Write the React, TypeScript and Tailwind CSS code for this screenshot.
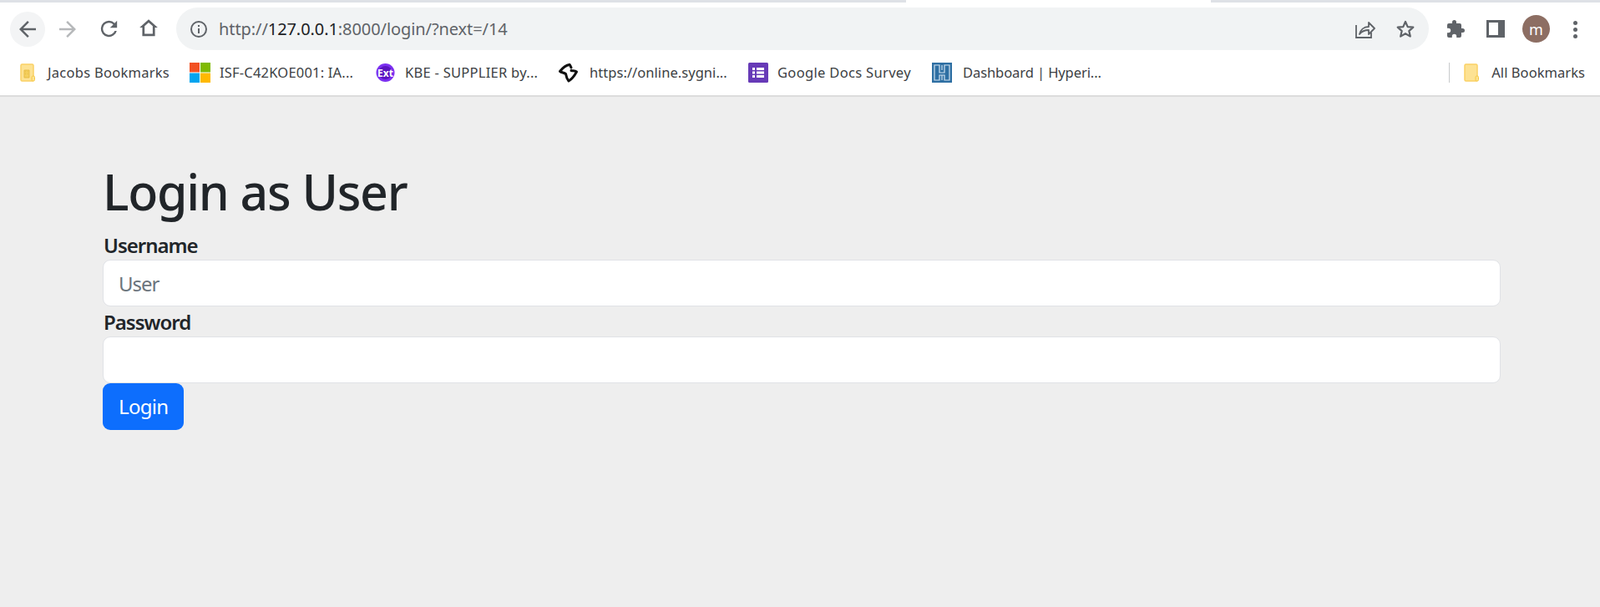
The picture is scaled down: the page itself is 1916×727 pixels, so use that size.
const pageFont = 'font-["Noto_Sans","Open_Sans",sans-serif]';

function FolderIcon({ building }: { building?: boolean }) {
  return (
    <svg width="18" height="22" viewBox="0 0 18 22" className="shrink-0">
      <path d="M2.5 1h12a1.5 1.5 0 0 1 1.5 1.5V20a1 1 0 0 1-1 1H2.500A1.500 1.500 0 0 1 1 19.500V2.500A1.500 1.500 0 0 1 2.500 1z" fill="#fde293" stroke="#fad165" strokeWidth="1.5" />
      <rect x="14" y="15" width="3.5" height="6" rx="1.5" fill="#fde293" stroke="#f5c842" strokeWidth="1" />
      {building && <path d="M5 8h6v9H5zM6.500 9.500v1M9 9.500v1M6.500 12v1M9 12v1" fill="#f4cf5e" stroke="#e3b63c" strokeWidth="0.8" />}
    </svg>
  );
}

function MicrosoftIcon() {
  return (
    <svg width="25" height="24" viewBox="0 0 25 24" className="shrink-0">
      <rect width="12" height="11.5" fill="#f25022" />
      <rect x="13" width="12" height="11.5" fill="#7fba00" />
      <rect y="12.5" width="12" height="11.5" fill="#00a4ef" />
      <rect x="13" y="12.5" width="12" height="11.5" fill="#ffb900" />
    </svg>
  );
}

function ExtIcon() {
  return (
    <svg width="23" height="24" viewBox="0 0 23 24" className="shrink-0">
      <circle cx="11.5" cy="12" r="11" fill="#7b2ff0" />
      <circle cx="11.5" cy="12" r="8" fill="#5a14c0" />
      <text x="11.5" y="16.5" textAnchor="middle" fontSize="12" fontWeight="700" fill="#fff" fontFamily="Noto Sans, sans-serif">Ext</text>
    </svg>
  );
}

function SygniaIcon() {
  return (
    <svg width="25" height="24" viewBox="0 0 25 24" className="shrink-0">
      <path d="M14 2.500C10 3 6 6 2.500 10.500c2 1.500 5 1.500 7 3 .5 3 1.500 6 3.500 8.500 3.500-2 7-6.500 9.500-11-2-1.500-4-1-6.500-1.500" fill="none" stroke="#111" strokeWidth="3" strokeLinecap="round" strokeLinejoin="round" />
      <path d="M14 2.500c1 1 1.500 2 2 3.500" fill="none" stroke="#111" strokeWidth="3" strokeLinecap="round" />
    </svg>
  );
}

function FormsIcon() {
  return (
    <svg width="24" height="24" viewBox="0 0 24 24" className="shrink-0">
      <rect width="24" height="24" rx="1.5" fill="#673ab7" />
      <path d="M5 6h3v3H5zM10 6h9v3h-9zM5 10.500h3v3H5zM10 10.500h9v3h-9zM5 15h3v3H5zM10 15h9v3h-9z" fill="#fff" />
    </svg>
  );
}

function HyperIcon() {
  return (
    <svg width="24" height="24" viewBox="0 0 24 24" className="shrink-0">
      <rect width="24" height="24" fill="#2e6fa3" />
      <path d="M3 3h6v9h6V3h6v18h-6v-6H9v6H3zM12 3v6M12 15v6" fill="none" stroke="#cfe2f0" strokeWidth="1.2" />
    </svg>
  );
}

const bookmarks = [
  { icon: <FolderIcon building />, label: 'Jacobs Bookmarks', box: 'ml-[24px]', gap: 'ml-[15px]', w: 'w-[145px] tracking-[0.27px]' },
  { icon: <MicrosoftIcon />, label: 'ISF-C42KOE001: IA...', box: 'ml-[25px]', gap: 'ml-[11px]', w: 'w-[160px] tracking-[0.2px]' },
  { icon: <ExtIcon />, label: 'KBE - SUPPLIER by...', box: 'ml-[27px]', gap: 'ml-[12px]', w: 'w-[160px] tracking-[0.27px]' },
  { icon: <SygniaIcon />, label: 'https://online.sygni...', box: 'ml-[23px]', gap: 'ml-[13px]', w: 'w-[165px] tracking-[0.05px]' },
  { icon: <FormsIcon />, label: 'Google Docs Survey', box: 'ml-[25px]', gap: 'ml-[11px]', w: 'w-[160px] tracking-[0.33px]' },
  { icon: <HyperIcon />, label: 'Dashboard | Hyperi...', box: 'ml-[25px]', gap: 'ml-[13px]', w: 'w-[165px] tracking-[-0.08px]' },
];

export default function App() {
  return (
    <div className={`min-h-[727px] bg-[#eeeeee] ${pageFont}`}>
      {/* tab strip */}
      <div className="flex h-[3px]">
        <div className="w-[1085px] bg-[#dee1e6]" />
        <div className="w-[365px] bg-white" />
        <div className="flex-1 bg-[#dee1e6]" />
      </div>

      {/* toolbar */}
      <div className="flex h-[57px] items-start bg-white pt-[6px]">
        <div className="ml-[12px] mt-[5px] flex h-[42px] w-[42px] items-center justify-center rounded-full bg-[#f3f4f5]">
          <svg width="30" height="30" viewBox="0 0 24 24"><path d="M20 11H7.800l5.600-5.600L12 4l-8 8 8 8 1.400-1.400L7.800 13H20z" fill="#5f6368" /></svg>
        </div>
        <div className="ml-[12px] mt-[11px]">
          <svg width="30" height="30" viewBox="0 0 24 24"><path d="M4 11h12.200l-5.600-5.600L12 4l8 8-8 8-1.400-1.400 5.600-5.600H4z" fill="#b6b8ba" /></svg>
        </div>
        <div className="ml-[20px] mt-[11px]">
          <svg width="29" height="29" viewBox="0 0 24 24"><path d="M17.650 6.350A7.960 7.960 0 0 0 12 4a8 8 0 1 0 7.730 10h-2.080A6 6 0 1 1 12 6c1.660 0 3.140.69 4.220 1.780L13 11h7V4z" fill="#5f6368" /></svg>
        </div>
        <div className="ml-[20px] mt-[12px]">
          <svg width="26" height="25" viewBox="0 0 24 22"><path d="M12 1.500 2 10.500h3V20h14v-9.500h3zM7.500 17.500V9l4.500-4 4.500 4v8.500z" fill="#5f6368" /></svg>
        </div>

        {/* omnibox */}
        <div className="ml-[20px] flex h-[51px] w-[1500px] items-center rounded-full bg-[#f1f3f4]">
          <div className="ml-[16px] shrink-0">
            <svg width="22" height="22" viewBox="0 0 22 22" fill="none" stroke="#5f6368" strokeWidth="2"><circle cx="11" cy="11" r="9" /><path d="M11 10v6M11 6v2" /></svg>
          </div>
          <div className="ml-[13px] text-[20px] tracking-[-0.08px] text-[#5f6368]">
            http://<span className="text-[#202124]">127.0.0.1</span>:8000/login/?next=/14
          </div>
          <div className="ml-auto shrink-0">
            <svg width="24" height="22" viewBox="0 0 24 22" fill="none" stroke="#5f6368" strokeWidth="1.8"><path d="M1 6v15h18v-6" /><path d="M5 17c1-5 5-9 11-9V3l7 7-7 7v-5c-5 0-8 1-11 5z" strokeLinejoin="round" /></svg>
          </div>
          <div className="ml-[24px] mr-[16px] shrink-0">
            <svg width="24" height="24" viewBox="0 0 24 24" fill="none" stroke="#5f6368" strokeWidth="2.2"><path d="M12 3l2.700 6.100 6.600.6-5 4.400 1.500 6.500-5.800-3.400-5.800 3.400 1.500-6.500-5-4.400 6.600-.6z" strokeLinejoin="round" /></svg>
          </div>
        </div>

        <div className="ml-[20px] mt-[14px]">
          <svg width="24" height="24" viewBox="0 0 24 24"><path d="M20.500 11H19V7a2 2 0 0 0-2-2h-4V3.500a2.500 2.500 0 0 0-5 0V5H4a2 2 0 0 0-2 2v3.800h1.500a2.700 2.700 0 0 1 0 5.400H2V20a2 2 0 0 0 2 2h3.800v-1.500a2.700 2.700 0 0 1 5.400 0V22H17a2 2 0 0 0 2-2v-4h1.500a2.500 2.500 0 0 0 0-5z" fill="#5f6368" /></svg>
        </div>
        <div className="ml-[25px] mt-[15px]">
          <svg width="22" height="21" viewBox="0 0 22 21"><path d="M0 0h22v21H0zM3 3v15h11V3z" fill="#5f6368" fillRule="evenodd" /></svg>
        </div>
        <div className="ml-[21px] mt-[9px] flex h-[33px] w-[33px] items-center justify-center rounded-full bg-[#8d6e63] text-[18px] leading-none text-white">
          m
        </div>
        <div className="ml-[28px] mt-[16px] flex flex-col gap-[3px]">
          <div className="h-[5px] w-[5px] rounded-full bg-[#5f6368]" />
          <div className="h-[5px] w-[5px] rounded-full bg-[#5f6368]" />
          <div className="h-[5px] w-[5px] rounded-full bg-[#5f6368]" />
        </div>
      </div>

      {/* bookmarks bar */}
      <div className="flex h-[56px] items-center border-b-2 border-[#dcdcdc] bg-white text-[16.5px] text-[#3c4043]">
        {bookmarks.map((b) => (
          <div key={b.label} className={`flex items-center ${b.box}`}>
            {b.icon}
            <span className={`${b.gap} ${b.w} whitespace-nowrap`}>{b.label}</span>
          </div>
        ))}
        <div className="ml-auto flex items-center">
          <div className="h-[24px] w-px bg-[#c8cacc]" />
          <div className="ml-[17px]"><FolderIcon /></div>
          <span className="ml-[15px] mr-[18px] whitespace-nowrap tracking-[0.05px]">All Bookmarks</span>
        </div>
      </div>

      {/* page */}
      <div className="pl-[123px] pr-[119px] pt-[77px] text-[24px] leading-[36px] text-[#212529]">
        <h1 className="mb-[10px] text-[59px] font-medium leading-[72px] tracking-[-1.3px]">Login as User</h1>
        <form>
          <label className="block h-[36px] pl-px font-semibold leading-[38px] tracking-[-1px]">Username</label>
          <input
            type="text"
            placeholder="User"
            className="block h-[56px] w-full rounded-[9px] border border-[#e0e2e6] bg-white px-[18px] tracking-[-1px] placeholder:text-[#6c757d] outline-none"
          />
          <label className="block h-[36px] pl-px font-semibold leading-[38px] tracking-[-1px]">Password</label>
          <input
            type="password"
            className="block h-[56px] w-full rounded-[9px] border border-[#e0e2e6] bg-white px-[18px] outline-none"
          />
          <button type="button" className="block h-[56px] rounded-[9px] bg-[#0d6efd] px-[19px] tracking-[-0.7px] text-white">
            Login
          </button>
        </form>
      </div>
    </div>
  );
}
